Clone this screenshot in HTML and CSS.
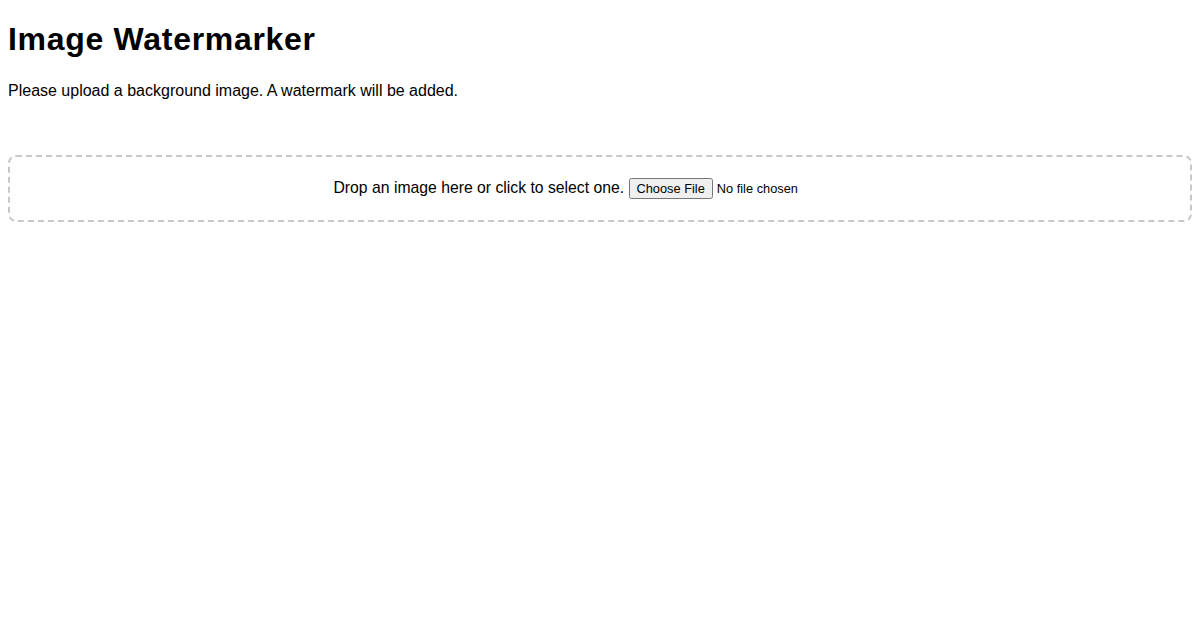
FILE: index.html
```html
<!DOCTYPE html>
<html>
<head>
<meta charset="utf-8">
<link rel="stylesheet" href="styles.css">
</head>
<body>
<h1 class="title">Image Watermarker</h1>
<p class="intro">Please upload a background image. A watermark will be added.</p>
<div class="dropzone">
  <label class="drop-label">Drop an image here or click to select one. <input type="file" class="file-input" accept="image/*"></label>
</div>
</body>
</html>
```
FILE: styles.css
```css
body {
  margin: 8px;
  font-family: "Liberation Sans", Arial, sans-serif;
  color: #000;
  background: #fff;
}
.title {
  font-size: 32px;
  font-weight: bold;
  margin: 13.44px 0 23.44px;
  letter-spacing: 0.7px;
}
.intro {
  font-size: 16px;
  margin: 16px 0;
}
.dropzone {
  margin-top: 55px;
  border: 2px dashed #c8c8c8;
  border-radius: 8px;
  padding: 21px 20px;
  text-align: center;
  font-size: 15.75px;
}
.file-input {
  font-family: "Liberation Sans", Arial, sans-serif;
  font-size: 12.8px;
  width: 238px;
}
```
